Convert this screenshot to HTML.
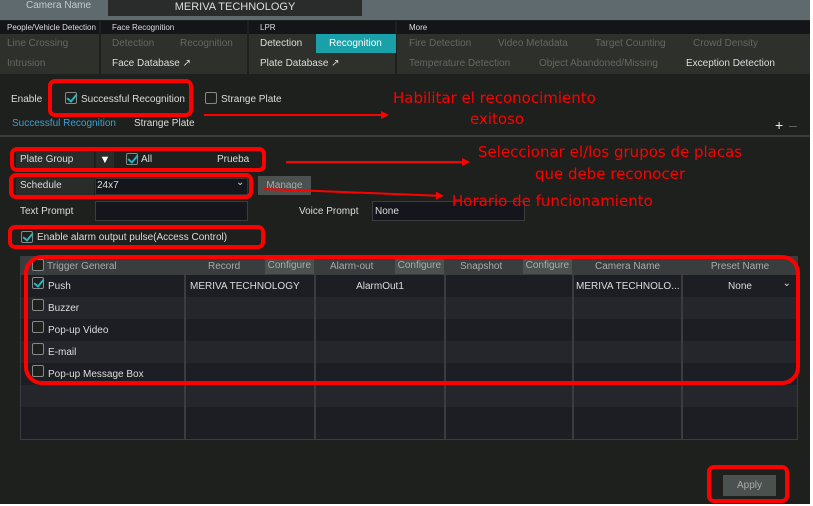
<!DOCTYPE html>
<html><head><style>
*{margin:0;padding:0;box-sizing:border-box}
body{width:813px;height:506px;overflow:hidden;background:#fff;font-family:"Liberation Sans",sans-serif;font-size:10px;color:#ddd;position:relative}
.a{position:absolute;white-space:nowrap}
.main{position:absolute;left:0;top:0;width:810px;height:504px;background:#1d201c}
.cb{position:absolute;width:12px;height:12px;border:1px solid #888;border-radius:2px;background:#1d201c}
.ck::after{content:"";position:absolute;left:3px;top:-1px;width:4px;height:8px;border:solid #2ab3bd;border-width:0 2px 2px 0;transform:rotate(40deg)}
.red{position:absolute;border:4px solid #f00;border-radius:7px}
.rt{position:absolute;color:#f00;font-family:"DejaVu Sans",sans-serif;font-size:15px;white-space:nowrap}
.ln{position:absolute;height:2px;background:#f00;transform-origin:0 50%}
.ln::after{content:"";position:absolute;right:-2px;top:-3px;border-left:8px solid #f00;border-top:4px solid transparent;border-bottom:4px solid transparent}
.g{color:#666}
table{border-collapse:collapse;table-layout:fixed;width:776px;color:#ddd}
td{border-right:2px solid #3a3d3d;height:22px;padding:0 4px;font-size:10px;overflow:hidden;white-space:nowrap;position:relative}
.cf{background:#4a514e;padding:0 3px;position:absolute;right:0;top:1px;height:16px;line-height:16px}
</style></head><body>
<div class="main"></div>
<div class="a" style="left:0;top:0;width:810px;height:20px;background:#5f6a6e"></div>
<div class="a" style="left:26px;top:0;color:#c5cbcd;font-size:10px">Camera Name</div>
<div class="a" style="left:108px;top:0;width:254px;height:16px;background:#2a2c2c;color:#ddd;text-align:center;font-size:11px;line-height:14px">MERIVA TECHNOLOGY</div>
<div class="a" style="left:0;top:21px;width:810px;height:13px;background:#131519"></div>
<div class="a" style="left:0;top:34px;width:810px;height:40px;background:#2e302c"></div>
<div class="a" style="left:99px;top:21px;width:2px;height:53px;background:#1d201c"></div>
<div class="a" style="left:247px;top:21px;width:2px;height:53px;background:#1d201c"></div>
<div class="a" style="left:395px;top:21px;width:2px;height:53px;background:#1d201c"></div>
<div class="a" style="left:7px;top:23px;font-size:8px;color:#ddd">People/Vehicle Detection</div>
<div class="a" style="left:112px;top:23px;font-size:8px">Face Recognition</div>
<div class="a" style="left:260px;top:23px;font-size:8px">LPR</div>
<div class="a" style="left:409px;top:23px;font-size:8px">More</div>
<div class="a" style="left:316px;top:34px;width:80px;height:19px;background:#1aa0a8"></div>
<div class="a g" style="left:7px;top:38px">Line Crossing</div>
<div class="a g" style="left:7px;top:58px">Intrusion</div>
<div class="a g" style="left:112px;top:38px">Detection</div>
<div class="a g" style="left:180px;top:38px">Recognition</div>
<div class="a" style="left:112px;top:58px">Face Database &#8599;</div>
<div class="a" style="left:260px;top:38px">Detection</div>
<div class="a" style="left:329px;top:38px;color:#fff">Recognition</div>
<div class="a" style="left:260px;top:58px">Plate Database &#8599;</div>
<div class="a g" style="left:409px;top:38px">Fire Detection</div>
<div class="a g" style="left:498px;top:38px">Video Metadata</div>
<div class="a g" style="left:595px;top:38px">Target Counting</div>
<div class="a g" style="left:693px;top:38px">Crowd Density</div>
<div class="a g" style="left:409px;top:58px">Temperature Detection</div>
<div class="a g" style="left:539px;top:58px">Object Abandoned/Missing</div>
<div class="a" style="left:686px;top:58px">Exception Detection</div>

<div class="a" style="left:11px;top:94px">Enable</div>
<div class="cb ck" style="left:65px;top:92px"></div>
<div class="a" style="left:81px;top:94px">Successful Recognition</div>
<div class="cb" style="left:205px;top:92px"></div>
<div class="a" style="left:221px;top:94px">Strange Plate</div>
<div class="a" style="left:12px;top:118px;color:#3aa0d8">Successful Recognition</div>
<div class="a" style="left:134px;top:118px">Strange Plate</div>
<div class="a" style="left:0;top:135px;width:810px;height:2px;background:#3a3d3a"></div>
<div class="a" style="left:775px;top:117px;font-size:14px;color:#eee">+</div>
<div class="a" style="left:789px;top:117px;font-size:14px;color:#666">&#8211;</div>

<div class="a" style="left:16px;top:151px;width:78px;height:18px;background:#2a2c2a"></div>
<div class="a" style="left:20px;top:154px">Plate Group</div>
<div class="a" style="left:96px;top:151px;width:18px;height:18px;background:#2a2c2a;color:#fff;text-align:center;font-size:11px;line-height:18px">&#9660;</div>
<div class="cb ck" style="left:126px;top:153px"></div>
<div class="a" style="left:141px;top:154px">All</div>
<div class="a" style="left:217px;top:154px">Prueba</div>
<div class="a" style="left:16px;top:178px;width:78px;height:17px;background:#2a2c2a"></div>
<div class="a" style="left:20px;top:180px">Schedule</div>
<div class="a" style="left:95px;top:178px;width:153px;height:17px;background:#14161c;border:1px solid #333"></div>
<div class="a" style="left:97px;top:180px">24x7</div>
<div class="a" style="left:236px;top:177px;font-size:10px">&#8964;</div>
<div class="a" style="left:258px;top:176px;width:53px;height:19px;background:#4a514e;color:#aaa;text-align:center;line-height:19px">Manage</div>
<div class="a" style="left:20px;top:206px">Text Prompt</div>
<div class="a" style="left:95px;top:201px;width:153px;height:20px;background:#14161c;border:1px solid #3a3d3d"></div>
<div class="a" style="left:299px;top:206px">Voice Prompt</div>
<div class="a" style="left:372px;top:201px;width:153px;height:20px;background:#14161c;border:1px solid #3a3d3d"></div>
<div class="a" style="left:375px;top:206px">None</div>
<div class="cb ck" style="left:21px;top:231px"></div>
<div class="a" style="left:37px;top:232px">Enable alarm output pulse(Access Control)</div>

<div class="a" style="left:20px;top:256px;width:778px;height:184px;background:#1c1e24;border:1px solid #3a3d3d">
<table>
<colgroup><col style="width:164px"><col style="width:130px"><col style="width:130px"><col style="width:128px"><col style="width:109px"><col style="width:115px"></colgroup>
<tr style="background:#3a3d3d;color:#aaa"><td style="height:18px;padding-left:26px">Trigger General</td><td style="height:18px;padding-left:22px">Record <span class="cf">Configure</span></td><td style="height:18px;padding-left:14px">Alarm-out <span class="cf">Configure</span></td><td style="height:18px;padding-left:14px">Snapshot <span class="cf">Configure</span></td><td style="height:18px;text-align:center">Camera Name</td><td style="text-align:center;height:18px;border:0">Preset Name</td></tr>
<tr><td style="padding-left:27px">Push</td><td>MERIVA TECHNOLOGY</td><td style="text-align:center">AlarmOut1</td><td></td><td style="padding-left:2px">MERIVA TECHNOLO...</td><td style="text-align:center;border:0">None <span style="position:absolute;right:6px;top:3px">&#8964;</span></td></tr>
<tr style="background:#24262b"><td style="padding-left:27px">Buzzer</td><td></td><td></td><td></td><td></td><td style="border:0"></td></tr>
<tr><td style="padding-left:27px">Pop-up Video</td><td></td><td></td><td></td><td></td><td style="border:0"></td></tr>
<tr style="background:#24262b"><td style="padding-left:27px">E-mail</td><td></td><td></td><td></td><td></td><td style="border:0"></td></tr>
<tr><td style="padding-left:27px">Pop-up Message Box</td><td></td><td></td><td></td><td></td><td style="border:0"></td></tr>
<tr style="background:#24262b"><td></td><td></td><td></td><td></td><td></td><td style="border:0"></td></tr>
<tr><td style="height:32px"></td><td></td><td></td><td></td><td></td><td style="border:0"></td></tr>
</table></div>
<div class="cb" style="left:32px;top:259px"></div>
<div class="cb ck" style="left:32px;top:277px"></div>
<div class="cb" style="left:32px;top:299px"></div>
<div class="cb" style="left:32px;top:321px"></div>
<div class="cb" style="left:32px;top:343px"></div>
<div class="cb" style="left:32px;top:365px"></div>

<div class="a" style="left:723px;top:475px;width:53px;height:21px;background:#4a514e;color:#aaa;text-align:center;line-height:21px">Apply</div>

<div class="red" style="left:48px;top:79px;width:145px;height:38px"></div>
<div class="red" style="left:10px;top:147px;width:256px;height:25px"></div>
<div class="red" style="left:9px;top:173px;width:244px;height:26px"></div>
<div class="red" style="left:8px;top:225px;width:257px;height:24px"></div>
<div class="red" style="left:24px;top:255px;width:776px;height:130px;border-radius:18px"></div>
<div class="red" style="left:707px;top:465px;width:82px;height:38px"></div>
<div class="ln" style="left:204px;top:114px;width:183px"></div>
<div class="ln" style="left:286px;top:161px;width:182px"></div>
<div class="ln" style="left:264px;top:188px;width:178px;transform:rotate(2.2deg)"></div>
<div class="rt" style="left:393px;top:89px">Habilitar el reconocimiento</div>
<div class="rt" style="left:470px;top:110px">exitoso</div>
<div class="rt" style="left:478px;top:143px">Seleccionar el/los grupos de placas</div>
<div class="rt" style="left:535px;top:165px">que debe reconocer</div>
<div class="rt" style="left:452px;top:192px">Horario de funcionamiento</div>
</body></html>
